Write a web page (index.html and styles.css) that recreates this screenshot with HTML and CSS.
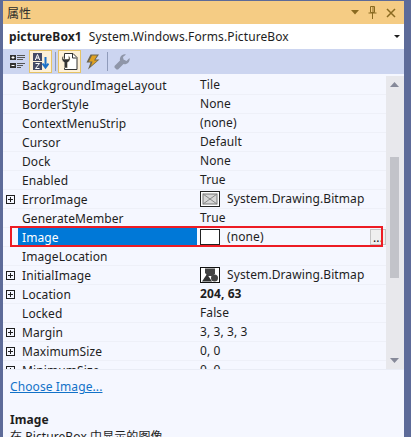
FILE: index.html
```html
<!DOCTYPE html>
<html lang="zh-CN">
<head>
  <meta charset="UTF-8">
  <title>属性</title>
  <link rel="stylesheet" href="styles.css">
</head>
<body>
  <div class="panel">
    <div class="titlebar">
      <span class="title">属性</span>
      <div class="title-buttons">
        <svg width="8" height="5" viewBox="0 0 8 5"><path d="M0 0h8L4 4.500z" fill="#8a6a20"/></svg>
        <svg width="9" height="13" viewBox="0 0 9 13"><path d="M2.500.5h4v6h-4zM5 1v5M.5 7h8M4.500 7v6" fill="none" stroke="#8a6a20"/></svg>
        <svg width="10" height="10" viewBox="0 0 10 10"><path d="M1 1l8 8M9 1l-8 8" fill="none" stroke="#8a6a20" stroke-width="1.500"/></svg>
      </div>
    </div>

    <div class="combo">
      <strong>pictureBox1</strong>
      <span class="combo-type">System.Windows.Forms.PictureBox</span>
      <svg class="combo-arrow" width="6" height="4" viewBox="0 0 6 4"><path d="M0 0h6L3 3z" fill="#1e1e1e"/></svg>
    </div>

    <div class="toolbar">
      <span class="tool">
        <svg width="15" height="15" viewBox="0 0 15 15">
          <path d="M0 1h6v5H0zM0 9h6v5H0z" fill="#333"/>
          <path d="M1.500 3.500h3M3 2v3M1.500 11.500h3" stroke="#fff"/>
          <path d="M7 1.500h8M7 3.500h8M7 5.500h6M7 9.500h8M7 11.500h6M7 13.500h4" stroke="#555"/>
        </svg>
      </span>
      <span class="tool on">
        <svg width="16" height="17" viewBox="0 0 16 17">
          <rect x="0" y="0" width="9" height="8" fill="#454a66"/>
          <path d="M2.300 7l2.200-5.500L6.700 7M3 5h3" fill="none" stroke="#fff"/>
          <rect x="0" y="9" width="9" height="8" fill="#454a66"/>
          <path d="M2.500 10.500h4l-4 5h4" fill="none" stroke="#fff"/>
          <path d="M12.500 4v10M9.500 10.500l3 4 3-4" fill="none" stroke="#1c71c9" stroke-width="2"/>
        </svg>
      </span>
      <span class="divider"></span>
      <span class="tool on">
        <svg width="17" height="17" viewBox="0 0 17 17">
          <path d="M3.500 .5h8.500l4 4v12H3.500z" fill="#fff" stroke="#333"/>
          <path d="M11.500 1v4h4" fill="none" stroke="#333"/>
          <path d="M2.500 2.500A4 4 0 0 0 3.500 9.500V15h3V9.500A4 4 0 0 0 7.500 2.500V6h-5z" fill="#333" stroke="#fdf0d8" stroke-width=".5"/>
        </svg>
      </span>
      <span class="tool">
        <svg width="14" height="16" viewBox="0 0 14 16">
          <path d="M4.500 .5h8.500L9.500 5.500h4L2 15.500l2.500-7H.5z" fill="#6b6550"/>
          <path d="M6 1.500h5L8 6.500h3.500L5 12l1.500-4.500H3z" fill="#e0a020"/>
        </svg>
      </span>
      <span class="divider"></span>
      <span class="tool">
        <svg width="16" height="16" viewBox="0 0 16 16"><path d="M15.500 4l-3 3-3-1.500-.5-2.500 3-2.500A5 5 0 0 0 6 6.500L.5 12v1.500L2.500 15.500H4L9.500 10A5 5 0 0 0 15.500 4z" fill="#8f96a8"/></svg>
      </span>
    </div>

    <div class="grid-area">
      <div class="rows">
        <div class="row"><span class="gutter"></span><span class="name">BackgroundImageLayout</span><span class="value">Tile</span></div>
        <div class="row"><span class="gutter"></span><span class="name">BorderStyle</span><span class="value">None</span></div>
        <div class="row"><span class="gutter"></span><span class="name">ContextMenuStrip</span><span class="value">(none)</span></div>
        <div class="row"><span class="gutter"></span><span class="name">Cursor</span><span class="value">Default</span></div>
        <div class="row"><span class="gutter"></span><span class="name">Dock</span><span class="value">None</span></div>
        <div class="row"><span class="gutter"></span><span class="name">Enabled</span><span class="value">True</span></div>
        <div class="row">
          <span class="gutter"><i class="plus"></i></span><span class="name">ErrorImage</span>
          <span class="value">
            <svg class="thumb" width="20" height="16" viewBox="0 0 20 16">
              <rect x=".5" y=".5" width="19" height="15" fill="#fff" stroke="#222"/>
              <rect x="3" y="3" width="14" height="10" fill="#d8d8d8" stroke="#777"/>
              <path d="M3 3l14 10M17 3L3 13" stroke="#888"/>
            </svg>System.Drawing.Bitmap
          </span>
        </div>
        <div class="row"><span class="gutter"></span><span class="name">GenerateMember</span><span class="value">True</span></div>
        <div class="row selected">
          <span class="gutter"></span><span class="name">Image</span>
          <span class="value">
            <svg class="thumb" width="20" height="16" viewBox="0 0 20 16"><rect x=".5" y=".5" width="19" height="15" fill="#fff" stroke="#222"/></svg>(none)
            <span class="dots">...</span>
          </span>
        </div>
        <div class="row"><span class="gutter"></span><span class="name">ImageLocation</span><span class="value"></span></div>
        <div class="row">
          <span class="gutter"><i class="plus"></i></span><span class="name">InitialImage</span>
          <span class="value">
            <svg class="thumb" width="20" height="16" viewBox="0 0 20 16">
              <rect x=".5" y=".5" width="19" height="15" fill="#fff" stroke="#111"/>
              <path d="M5 1.500h10V7l-3 2H8L5 6z" fill="#444"/>
              <path d="M2 14.500L7 7l5 7.500z" fill="#333"/>
              <circle cx="14.500" cy="11" r="3.500" fill="#444"/>
            </svg>System.Drawing.Bitmap
          </span>
        </div>
        <div class="row"><span class="gutter"><i class="plus"></i></span><span class="name">Location</span><span class="value bold">204, 63</span></div>
        <div class="row"><span class="gutter"></span><span class="name">Locked</span><span class="value">False</span></div>
        <div class="row"><span class="gutter"><i class="plus"></i></span><span class="name">Margin</span><span class="value">3, 3, 3, 3</span></div>
        <div class="row"><span class="gutter"><i class="plus"></i></span><span class="name">MaximumSize</span><span class="value">0, 0</span></div>
        <div class="row"><span class="gutter"><i class="plus"></i></span><span class="name">MinimumSize</span><span class="value">0, 0</span></div>
      </div>
      <div class="scrollbar">
        <svg class="arrow-up" width="9" height="5" viewBox="0 0 9 5"><path d="M4.500 0L9 5H0z" fill="#868999"/></svg>
        <span class="scroll-thumb"></span>
        <svg class="arrow-down" width="9" height="5" viewBox="0 0 9 5"><path d="M0 0h9L4.500 5z" fill="#868999"/></svg>
      </div>
      <div class="highlight"></div>
    </div>

    <div class="commands">
      <a class="command-link">Choose Image...</a>
      <h3>Image</h3>
      <p>在 PictureBox 中显示的图像。</p>
    </div>
  </div>
</body>
</html>
```

FILE: styles.css
```css
html, body {
  margin: 0;
  height: 100%;
  overflow: hidden;
}

body {
  background: #5d6b99;
  font-family: "Noto Sans", "Noto Sans CJK SC", sans-serif;
  font-size: 12px;
  letter-spacing: .1px;
  color: #1e1e1e;
}

.panel {
  display: flex;
  flex-direction: column;
  height: 436px;
  margin: 1px 7px 0 3px;
  background: #f5f7ff;
}

.titlebar {
  flex: 0 0 23px;
  display: flex;
  align-items: center;
  justify-content: space-between;
  padding: 0 8px 0 4px;
  background: #f5cc84;
}

.title {
  font-size: 12px;
  color: #2b2b2b;
}

.title-buttons {
  display: flex;
  align-items: center;
  gap: 9px;
}

.combo {
  flex: 0 0 25px;
  display: flex;
  align-items: center;
  padding: 0 6px;
  background: #fff;
  white-space: nowrap;
}

.combo strong {
  font-weight: 700;
  margin-right: 7px;
}

.combo-arrow {
  margin-left: auto;
  margin-right: -2px;
}

.toolbar {
  flex: 0 0 25px;
  display: flex;
  align-items: center;
  padding: 0 1px 0 3px;
  background: #ccd5f0;
}

.tool {
  display: flex;
  align-items: center;
  justify-content: center;
  width: 23px;
  height: 23px;
  box-sizing: border-box;
}

.tool.on {
  background: #fdf0d8;
  border: 1px solid #e5c365;
}

.divider {
  width: 1px;
  height: 19px;
  background: #8f9bba;
  margin: 0 2px 0 3px;
}

.grid-area {
  position: relative;
  flex: 0 0 294px;
  display: flex;
  margin-top: 2px;
  overflow: hidden;
  border-bottom: 1px solid #e9ecf5;
  box-sizing: border-box;
}

.rows {
  flex: 1;
  min-width: 0;
}

.row {
  display: flex;
  height: 19px;
  box-sizing: border-box;
  border-bottom: 1px solid #eef0f8;
  line-height: 20px;
  white-space: nowrap;
}

.gutter {
  flex: 0 0 15px;
  display: flex;
  align-items: center;
  background: #f5f7ff;
}

.plus {
  display: block;
  width: 9px;
  height: 9px;
  margin-left: 3px;
  box-sizing: border-box;
  border: 1px solid #1e1e1e;
  background:
    linear-gradient(#1e1e1e, #1e1e1e) center / 5px 1px no-repeat,
    linear-gradient(#1e1e1e, #1e1e1e) center / 1px 5px no-repeat;
}

.name {
  flex: 0 0 179px;
  padding-left: 4px;
  box-sizing: border-box;
  margin-right: 1px;
}

.value {
  flex: 1;
  display: flex;
  align-items: center;
  padding-left: 2px;
  min-width: 0;
}

.value.bold {
  font-weight: 700;
}

.thumb {
  flex: none;
  margin-right: 7px;
}

.selected .name {
  background: #0078d7;
  color: #fff;
}

.dots {
  margin-left: auto;
  width: 16px;
  height: 16px;
  box-sizing: border-box;
  border: 1px solid #c4c4c4;
  background: #efefef;
  line-height: 15px;
  text-align: center;
  color: #111;
}

.scrollbar {
  flex: 0 0 18px;
  display: flex;
  flex-direction: column;
  align-items: center;
  box-sizing: border-box;
  padding-right: 1px;
  background: #e8e8ec;
}

.arrow-up {
  margin-top: 6px;
}

.scroll-thumb {
  width: 9px;
  height: 121px;
  margin-top: 70px;
  background: #c2c3c9;
}

.arrow-down {
  margin-top: auto;
  margin-bottom: 6px;
}

.highlight {
  position: absolute;
  left: 7px;
  top: 150px;
  width: 373px;
  height: 21px;
  box-sizing: border-box;
  border: 2px solid #ed1c24;
}

.commands {
  flex: 1;
  padding: 8px 7px;
  overflow: hidden;
}

.command-link {
  display: block;
  color: #1272c8;
  text-decoration: underline;
}

.commands h3 {
  margin: 16px 0 0;
  font-size: 12px;
  line-height: 17px;
  font-weight: 700;
}

.commands p {
  margin: 0;
  line-height: 17px;
}
```
